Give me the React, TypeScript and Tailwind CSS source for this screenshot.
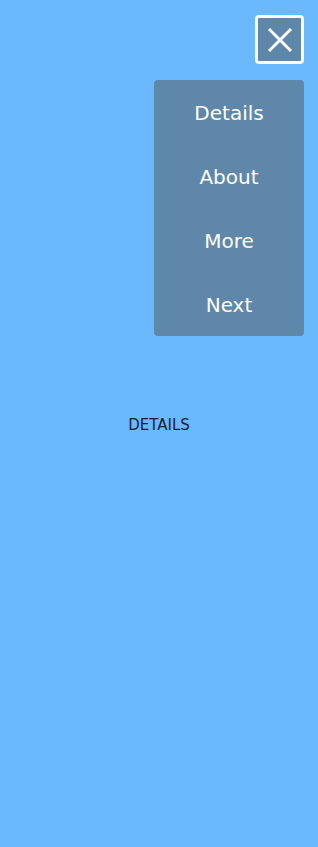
export default function App() {
  const items = ['Details', 'About', 'More', 'Next']

  return (
    <div className="min-h-[847px] bg-[#6bb9fd] font-['DejaVu_Sans',Verdana,sans-serif]">
      <div className="flex flex-col items-end pr-[14px] pt-[15px]">
        <button className="flex h-[49px] w-[49px] items-center justify-center rounded-[4px] border-[3px] border-white bg-[#5f87aa]">
          <svg width="26" height="26" viewBox="0 0 26 26" fill="none">
            <path d="M2 2L24 24M24 2L2 24" stroke="white" strokeWidth="3" />
          </svg>
        </button>
        <nav className="mt-[16px] flex w-[150px] flex-col rounded-[4px] bg-[#5f87aa]">
          {items.map((item) => (
            <a
              key={item}
              className="flex h-[64px] items-center justify-center pt-[2px] text-[20px] text-white"
            >
              {item}
            </a>
          ))}
        </nav>
      </div>
      <main className="mt-[78px] text-center text-[15px] text-[#0e1e33]">DETAILS</main>
    </div>
  )
}
